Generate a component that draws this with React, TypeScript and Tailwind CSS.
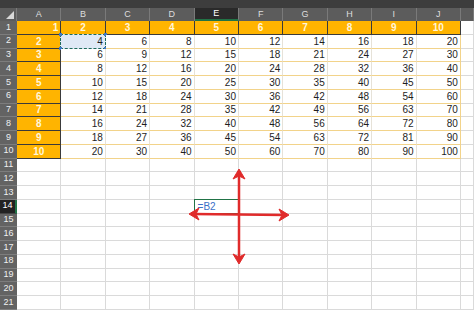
import React from "react";

const COLS = ["A", "B", "C", "D", "E", "F", "G", "H", "I", "J", ""];
const ROWS = Array.from({ length: 21 }, (_, i) => i + 1);

const FONT = { fontFamily: '"Liberation Sans", Arial, sans-serif' };

function Cell({ r, c }: { r: number; c: number }) {
  // c: 0 = A ... 9 = J, 10 = K (partly visible)
  const isHeadRow = r === 1 && c <= 9;
  const isHeadCol = c === 0 && r >= 2 && r <= 10;
  const isData = r >= 2 && r <= 10 && c >= 1 && c <= 9;

  if (isHeadRow || isHeadCol) {
    const value = isHeadRow ? c + 1 : r;
    const align = r === 1 && c === 0 ? "justify-end pr-[2px]" : "justify-center";
    return (
      <div
        className={`flex items-center ${align} h-[13.75px] bg-[#ffb400] border-r border-b border-[#3a3a3a] text-[10px] font-bold text-[#fff6dc]`}
      >
        {value}
      </div>
    );
  }

  if (isData) {
    const value = r * (c + 1);
    const selected = r === 2 && c === 1;
    return (
      <div
        className={`relative flex items-center justify-end pr-[2px] h-[13.75px] bg-white border-b border-b-[#f2d38a] border-r ${
          c === 9 ? "border-r-[#f2d38a]" : "border-r-[#e6e2d8]"
        } text-[10px] text-[#1e1e1e]`}
      >
        {selected && (
          <div className="absolute inset-[-1px] bg-[#dfe9f6] border-[1.5px] border-dashed border-[#1d6a5c]">
            <div className="absolute -left-[2px] -top-[2px] w-[3px] h-[3px] bg-[#3f79c9]" />
            <div className="absolute -right-[2px] -top-[2px] w-[3px] h-[3px] bg-[#3f79c9]" />
            <div className="absolute -left-[2px] -bottom-[2px] w-[3px] h-[3px] bg-[#3f79c9]" />
            <div className="absolute -right-[2px] -bottom-[2px] w-[3px] h-[3px] bg-[#3f79c9]" />
          </div>
        )}
        <span className="relative">{value}</span>
      </div>
    );
  }

  // active cell E14
  if (r === 14 && c === 4) {
    return (
      <div className="relative flex items-center h-[13.75px] bg-white border-r border-b border-[#dadada]">
        <div className="absolute inset-[-1px] border border-[#217346]" />
        <span className="relative pl-[3px] text-[10px] text-[#3c6fc8]">=B2</span>
      </div>
    );
  }

  return <div className="h-[13.75px] bg-white border-r border-b border-[#dadada]" />;
}

function Arrows() {
  return (
    <svg className="absolute left-0 top-0 pointer-events-none" width="474" height="310">
      <g stroke="#e02b2b" strokeWidth="2.5" strokeLinecap="round" fill="#e02b2b">
        <line x1="239" y1="174" x2="239" y2="260" />
        <line x1="193" y1="214" x2="285" y2="215" />
      </g>
      <g fill="#e02b2b" stroke="#e02b2b" strokeWidth="1" strokeLinejoin="round">
        <polygon points="239,169 245,179 239,176 233,179" />
        <polygon points="239,264 245,254 239,257 233,254" />
        <polygon points="189,214 199,208 196,214 199,220" />
        <polygon points="289,215 279,209 282,215 279,221" />
      </g>
    </svg>
  );
}

export default function App() {
  return (
    <div className="relative w-[474px] h-[310px] overflow-hidden bg-white" style={FONT}>
      <div className="h-[8px] bg-[#3d3d3d]" />
      <div className="grid grid-cols-[17px_repeat(10,44.4px)_1fr]">
        {/* column headers */}
        <div className="relative h-[13px] bg-[#5c5c5c] border-r border-[#7a7a7a]">
          <div className="absolute right-[2px] bottom-[2px] w-0 h-0 border-l-[8px] border-l-transparent border-b-[8px] border-b-[#d8d8d8]" />
        </div>
        {COLS.map((col, i) => (
          <div
            key={"h" + i}
            className={`flex items-center justify-center h-[13px] border-r border-[#7a7a7a] text-[9px] ${
              i === 4 ? "bg-[#2a2a2a] border-b-2 border-b-[#217346] text-white" : "bg-[#5c5c5c] text-[#dedede]"
            }`}
          >
            {col}
          </div>
        ))}

        {ROWS.map((r) => (
          <React.Fragment key={r}>
            <div
              className={`flex items-center justify-center h-[13.75px] border-b text-[9px] ${
                r === 14
                  ? "bg-[#222222] border-[#444444] border-r-2 border-r-[#217346] text-white"
                  : "bg-[#636363] border-[#7d7d7d] text-[#f0f0f0]"
              }`}
            >
              {r}
            </div>
            {COLS.map((_, c) => (
              <Cell key={c} r={r} c={c} />
            ))}
          </React.Fragment>
        ))}
      </div>
      <Arrows />
    </div>
  );
}
